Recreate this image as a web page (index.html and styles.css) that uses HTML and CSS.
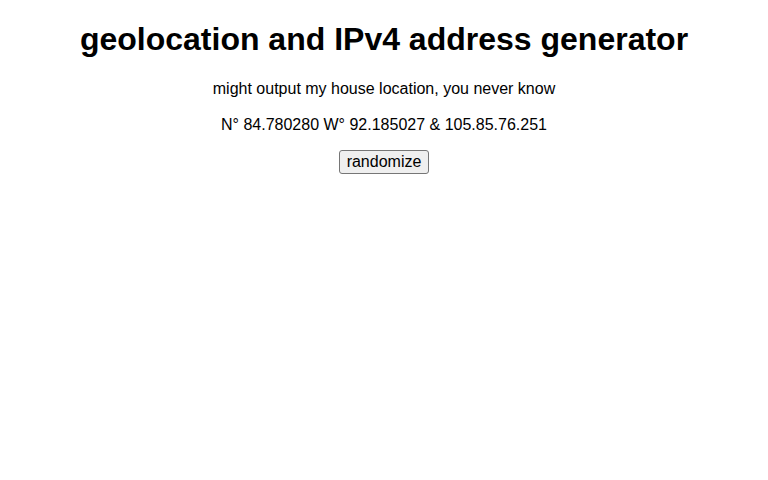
FILE: index.html
```html
<!DOCTYPE html>
<html>
<head>
<meta charset="utf-8">
<link rel="stylesheet" href="styles.css">
</head>
<body class="page">
<h1 class="title">geolocation and IPv4 address generator</h1>
<p class="line">might output my house location, you never know</p>
<p class="line">N° 84.780280 W° 92.185027 &amp; 105.85.76.251</p>
<button class="btn">randomize</button>
</body>
</html>
```
FILE: styles.css
```css
html {
  margin: 0;
  padding: 0;
}
.page {
  margin: 0;
  padding: 0 8px;
  font-family: "Liberation Sans", Arial, sans-serif;
  text-align: center;
  color: #000;
  background: #fff;
}
.title {
  font-size: 32px;
  font-weight: bold;
  margin: 21.44px 0;
}
.line {
  font-size: 16px;
  margin: 18px 0 16px;
}
.btn {
  font-family: "Liberation Sans", Arial, sans-serif;
  font-size: 16px;
  color: #000;
  background: #efefef;
  border: 1px solid #767676;
  border-radius: 3px;
  padding: 2px 7px;
}
```
